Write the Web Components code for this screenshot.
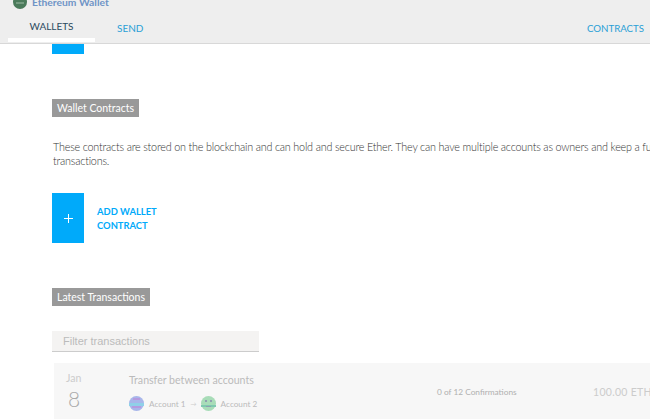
<!DOCTYPE html>
<html lang="en">
<head>
<meta charset="utf-8">
<title>Ethereum Wallet</title>
<style>
    html, body { margin: 0; height: 419px; width: 650px; overflow: hidden; background: #fff; }
    body { font-family: Lato, "Open Sans", sans-serif; color: #555; }
</style>
</head>
<body>
<wallet-header></wallet-header>
<wallet-page>
    <section-label style="margin-top:45px">Wallet Contracts</section-label>
    <p-text>These contracts are stored on the blockchain and can hold and secure Ether. They can have multiple accounts as owners and keep a full log of all transactions.</p-text>
    <add-button>ADD WALLET<br>CONTRACT</add-button>
    <section-label style="margin-top:45px">Latest Transactions</section-label>
    <filter-input></filter-input>
    <tx-row></tx-row>
</wallet-page>

<script>
class WalletHeader extends HTMLElement {
    constructor() {
        super();
        this.attachShadow({ mode: 'open' });
    }

    connectedCallback() {
        this.shadowRoot.innerHTML = `
            <style>
                :host { display: block; height: 43px; background: #eee; border-bottom: 1px solid #d8d8d8; overflow: hidden; position: relative; }
                .title { display: flex; align-items: center; gap: 5px; margin: -5px 0 0 13px; height: 14px; color: #6f94c6; font-size: 10.3px; font-weight: 700; }
                .logo { display: block; width: 14px; height: 14px; }
                nav { display: flex; align-items: flex-end; margin-top: 11px; font-size: 10px; }
                a { color: #2a9fd6; text-decoration: none; }
                .tab { width: 87px; margin-left: 8px; text-align: center; padding-bottom: 10px; color: #2b4a5e; position: relative; }
                .tab::after { content: ''; position: absolute; left: 0; right: 0; bottom: 0; height: 4px; background: #fff; }
                .send { margin-left: 22px; padding-bottom: 8px; }
                .contracts { margin-left: auto; margin-right: 6px; padding-bottom: 8px; font-size: 9.7px; }
            </style>
            <div class="title">
                <svg class="logo" viewBox="0 0 14 14"><circle cx="7" cy="7" r="7" fill="#4a7a5a"/><path d="M3 4.5h8M3 8h8" stroke="#9dbba6" stroke-width="1.2"/></svg>
                <span>Ethereum Wallet</span>
            </div>
            <nav>
                <a class="tab" href="#">WALLETS</a>
                <a class="send" href="#">SEND</a>
                <a class="contracts" href="#">CONTRACTS</a>
            </nav>
        `;
    }
}

class WalletPage extends HTMLElement {
    constructor() {
        super();
        this.attachShadow({ mode: 'open' });
        this.shadowRoot.innerHTML = `
            <style>
                :host { display: block; width: 900px; padding-left: 52px; }
                .stub { width: 32px; height: 10px; background: #00aafa; }
            </style>
            <div class="stub"></div>
            <slot></slot>
        `;
    }
}

class SectionLabel extends HTMLElement {
    constructor() {
        super();
        this.attachShadow({ mode: 'open' });
        this.shadowRoot.innerHTML = `
            <style>
                :host { display: block; width: max-content; height: 18px; line-height: 18px; padding: 0 5px; background: #999; color: #fff; font-size: 10.5px; }
            </style>
            <slot></slot>
        `;
    }
}

class PText extends HTMLElement {
    constructor() {
        super();
        this.attachShadow({ mode: 'open' });
        this.shadowRoot.innerHTML = `
            <style>
                :host { display: block; margin: 23px 0 0 1px; width: 700px; font-size: 10.8px; font-weight: 300; letter-spacing: -0.19px; line-height: 14px; color: #333; }
            </style>
            <slot></slot>
        `;
    }
}

class AddButton extends HTMLElement {
    constructor() {
        super();
        this.attachShadow({ mode: 'open' });
        this.shadowRoot.innerHTML = `
            <style>
                :host { display: flex; align-items: center; gap: 13px; margin-top: 25px; height: 50px; color: #00aafa; font-size: 9.4px; font-weight: 700; line-height: 14px; }
                .box { width: 32px; height: 50px; background: #00aafa; display: flex; align-items: center; justify-content: center; }
                .label { padding-top: 2px; }
            </style>
            <div class="box"><svg width="9" height="9" viewBox="0 0 9 9"><path d="M4.5 0v9M0 4.5h9" stroke="#fff" stroke-width="1" fill="none"/></svg></div>
            <div class="label"><slot></slot></div>
        `;
    }
}

class FilterInput extends HTMLElement {
    constructor() {
        super();
        this.attachShadow({ mode: 'open' });
        this.shadowRoot.innerHTML = `
            <style>
                :host { display: block; margin-top: 25px; width: 207px; }
                input { display: block; box-sizing: border-box; width: 100%; height: 21px; padding: 0 11px; border: 0; border-bottom: 1px solid #ccc; background: #f4f3f2; font: 11px "Liberation Sans", Arial, sans-serif; }
                input::placeholder { color: #bbb; opacity: 1; }
            </style>
            <input placeholder="Filter transactions">
        `;
    }
}

class TxRow extends HTMLElement {
    constructor() {
        super();
        this.attachShadow({ mode: 'open' });
        this.shadowRoot.innerHTML = `
            <style>
                :host { display: flex; margin: 11px 0 0 2px; height: 70px; background: #f7f7f7; color: #bbb; font-size: 10.5px; }
                .date { width: 63px; padding: 9px 0 0 12px; box-sizing: border-box; font-size: 10.5px; color: #ccc; }
                .date b { display: block; font-weight: 300; font-size: 21px; line-height: 29px; margin-left: 2px; color: #aaa; }
                .main { width: 308px; padding-top: 10px; margin-left: 12px; }
                .title { font-size: 10.6px; line-height: 14px; }
                .accounts { display: flex; align-items: center; gap: 5px; margin-top: 9px; font-size: 8.2px; }
                .accounts svg { flex: none; }
                .arrow { width: 5px; font-size: 6px; color: #ccc; }
                .conf { width: 156px; padding-top: 23px; font-size: 8.3px; color: #b0b0b0; line-height: 13px; }
                .amount { padding-top: 22px; font-size: 10.5px; letter-spacing: 0.3px; color: #ccc; line-height: 14px; white-space: nowrap; }
            </style>
            <div class="date">Jan<b>8</b></div>
            <div class="main">
                <div class="title">Transfer between accounts</div>
                <div class="accounts">
                    <svg width="15" height="15" viewBox="0 0 15 15"><circle cx="7.5" cy="7.5" r="7.5" fill="#a8b6ea"/><path d="M0 7h15v3H0z" fill="#8fd0e8"/><path d="M4 2h7v2H4zM3 10h9v2H3z" fill="#b49be0"/></svg>
                    <span>Account 1</span><span class="arrow">→</span>
                    <svg width="15" height="15" viewBox="0 0 15 15"><circle cx="7.5" cy="7.5" r="7.5" fill="#a8dcb8"/><path d="M0 9h15v2H0z" fill="#7fc9b0"/><path d="M4 4h2v2H4zM9 4h2v2H9zM5 10h5v1H5z" fill="#8f9fb0"/></svg>
                    <span>Account 2</span>
                </div>
            </div>
            <div class="conf">0 of 12 Confirmations</div>
            <div class="amount">100.00 ETHER</div>
        `;
    }
}

customElements.define('wallet-header', WalletHeader);
customElements.define('wallet-page', WalletPage);
customElements.define('section-label', SectionLabel);
customElements.define('p-text', PText);
customElements.define('add-button', AddButton);
customElements.define('filter-input', FilterInput);
customElements.define('tx-row', TxRow);
</script>
</body>
</html>
